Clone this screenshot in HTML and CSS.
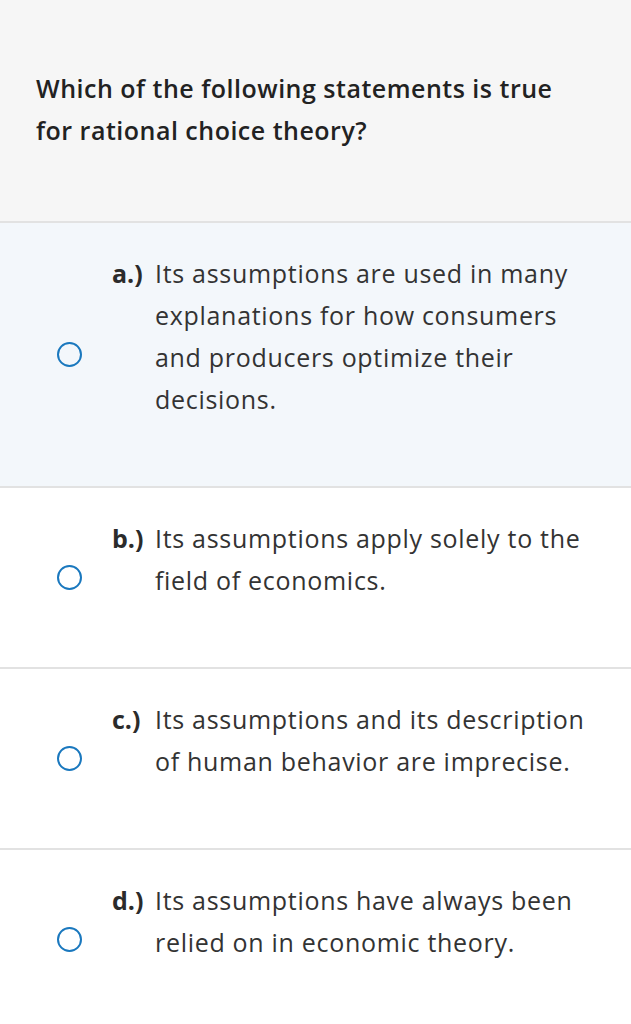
FILE: index.html
```html
<!DOCTYPE html>
<html>
<head>
<meta charset="utf-8">
<link rel="stylesheet" href="styles.css">
</head>
<body>
<div class="page">
  <header class="question">
    <p class="question-text">Which of the following statements is true<br>for rational choice theory?</p>
  </header>
  <ul class="options">
    <li class="option option-active">
      <span class="radio"></span>
      <div class="option-body">
        <span class="label">a.)</span>
        <span class="text">Its assumptions are used in many<br>explanations for how consumers<br>and producers optimize their<br>decisions.</span>
      </div>
    </li>
    <li class="option">
      <span class="radio"></span>
      <div class="option-body">
        <span class="label">b.)</span>
        <span class="text">Its assumptions apply solely to the<br>field of economics.</span>
      </div>
    </li>
    <li class="option">
      <span class="radio"></span>
      <div class="option-body">
        <span class="label">c.)</span>
        <span class="text">Its assumptions and its description<br>of human behavior are imprecise.</span>
      </div>
    </li>
    <li class="option">
      <span class="radio"></span>
      <div class="option-body">
        <span class="label">d.)</span>
        <span class="text">Its assumptions have always been<br>relied on in economic theory.</span>
      </div>
    </li>
  </ul>
</div>
</body>
</html>
```

FILE: styles.css
```css
html, body {
  margin: 0;
  padding: 0;
  background: #ffffff;
}
body {
  font-family: "Open Sans", "Liberation Sans", sans-serif;
  color: #2b2b2b;
}
.page {
  width: 631px;
}
.question {
  background: #f6f6f6;
  padding: 67px 36px 70px 36px;
  border-bottom: 2px solid #e2e2e2;
  height: 84px;
}
.question-text {
  margin: 0;
  font-size: 25px;
  line-height: 42px;
  font-weight: 600;
  letter-spacing: 0.5px;
  color: #222222;
  white-space: nowrap;
}
.options {
  list-style: none;
  margin: 0;
  padding: 0;
}
.option {
  display: flex;
  align-items: center;
  border-bottom: 2px solid #e2e2e2;
  background: #ffffff;
}
.option-active {
  background: #f3f7fb;
}
.radio {
  flex: none;
  width: 21px;
  height: 21px;
  border: 2.5px solid #1a78be;
  border-radius: 50%;
  margin-left: 57px;
}
.option-body {
  display: flex;
  align-items: flex-start;
  padding: 29px 0 66px 30px;
}
.label {
  flex: none;
  width: 43px;
  font-size: 25px;
  line-height: 42px;
  font-weight: 700;
  color: #2b2b2b;
}
.text {
  font-size: 25px;
  line-height: 42px;
  letter-spacing: 0.7px;
  color: #333333;
  white-space: nowrap;
}
```
